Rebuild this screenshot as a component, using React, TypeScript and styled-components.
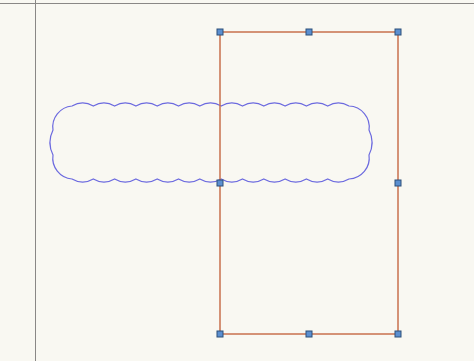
import React from "react";
import styled, { createGlobalStyle } from "styled-components";

const GlobalStyle = createGlobalStyle`
	html, body {
		margin: 0;
		padding: 0;
		background: #f9f8f2;
		font-family: "Liberation Sans", Arial, sans-serif;
	}
`;

const Canvas = styled.div`
	position: relative;
	width: 474px;
	height: 361px;
	overflow: hidden;
	display: grid;
	grid-template-columns: 36px 1fr;
	grid-template-rows: 4px 1fr;
	background: #f9f8f2;
`;

const Margin = styled.div<{ $side: "top" | "left" | "corner" }>`
	border-bottom: ${(p) => (p.$side === "left" ? "none" : "1px solid #8a8886")};
	border-right: ${(p) => (p.$side === "top" ? "none" : "1px solid #8a8886")};
`;

const Page = styled.div`
	border-top: 1px solid #8a8886;
	margin-top: -1px;
`;

const Drawing = styled.svg`
	position: absolute;
	left: 0;
	top: 0;
	width: 474px;
	height: 361px;
	pointer-events: none;
`;

// cloud outline: shallow arcs between cusp points, walked clockwise
const buildCloud = () => {
	const left = 53;
	const right = 369;
	const top = 106;
	const bottom = 179;
	const x0 = 72;
	const x1 = 349;
	const ySide = [130, 155];
	const n = 13;
	const step = (x1 - x0) / n;
	let d = `M ${x0} ${top}`;
	const arc = (r: number, x: number, y: number) => ` A ${r} ${r} 0 0 1 ${x.toFixed(1)} ${y.toFixed(1)}`;
	for (let i = 1; i <= n; i++) d += arc(21, x0 + step * i, top);
	d += arc(21, right, ySide[0]);
	d += arc(28, right, ySide[1]);
	d += arc(21, x1, bottom);
	for (let i = n - 1; i >= 0; i--) d += arc(21, x0 + step * i, bottom);
	d += arc(21, left, ySide[1]);
	d += arc(28, left, ySide[0]);
	d += arc(21, x0, top);
	return d + " Z";
};

const handles: [number, number][] = [
	[220, 32],
	[309, 32],
	[398, 32],
	[220, 183],
	[398, 183],
	[220, 334],
	[309, 334],
	[398, 334]
];

const Handle = ({ x, y }: { x: number; y: number }) => (
	<rect x={x - 3} y={y - 3} width={6} height={6} fill="#5b8fd0" stroke="#2d4e78" strokeWidth={1} />
);

const App = () => {
	return (
		<>
			<GlobalStyle />
			<Canvas>
				<Margin $side="corner" />
				<Margin $side="top" />
				<Margin $side="left" />
				<Page />
				<Drawing viewBox="0 0 474 361">
					<path d={buildCloud()} fill="none" stroke="#6c6adf" strokeWidth={1.2} />
					<rect x={220} y={32} width={178} height={302} fill="none" stroke="#c8704e" strokeWidth={1.5} />
					{handles.map(([x, y]) => (
						<Handle key={`${x}-${y}`} x={x} y={y} />
					))}
				</Drawing>
			</Canvas>
		</>
	);
};

export default App;
